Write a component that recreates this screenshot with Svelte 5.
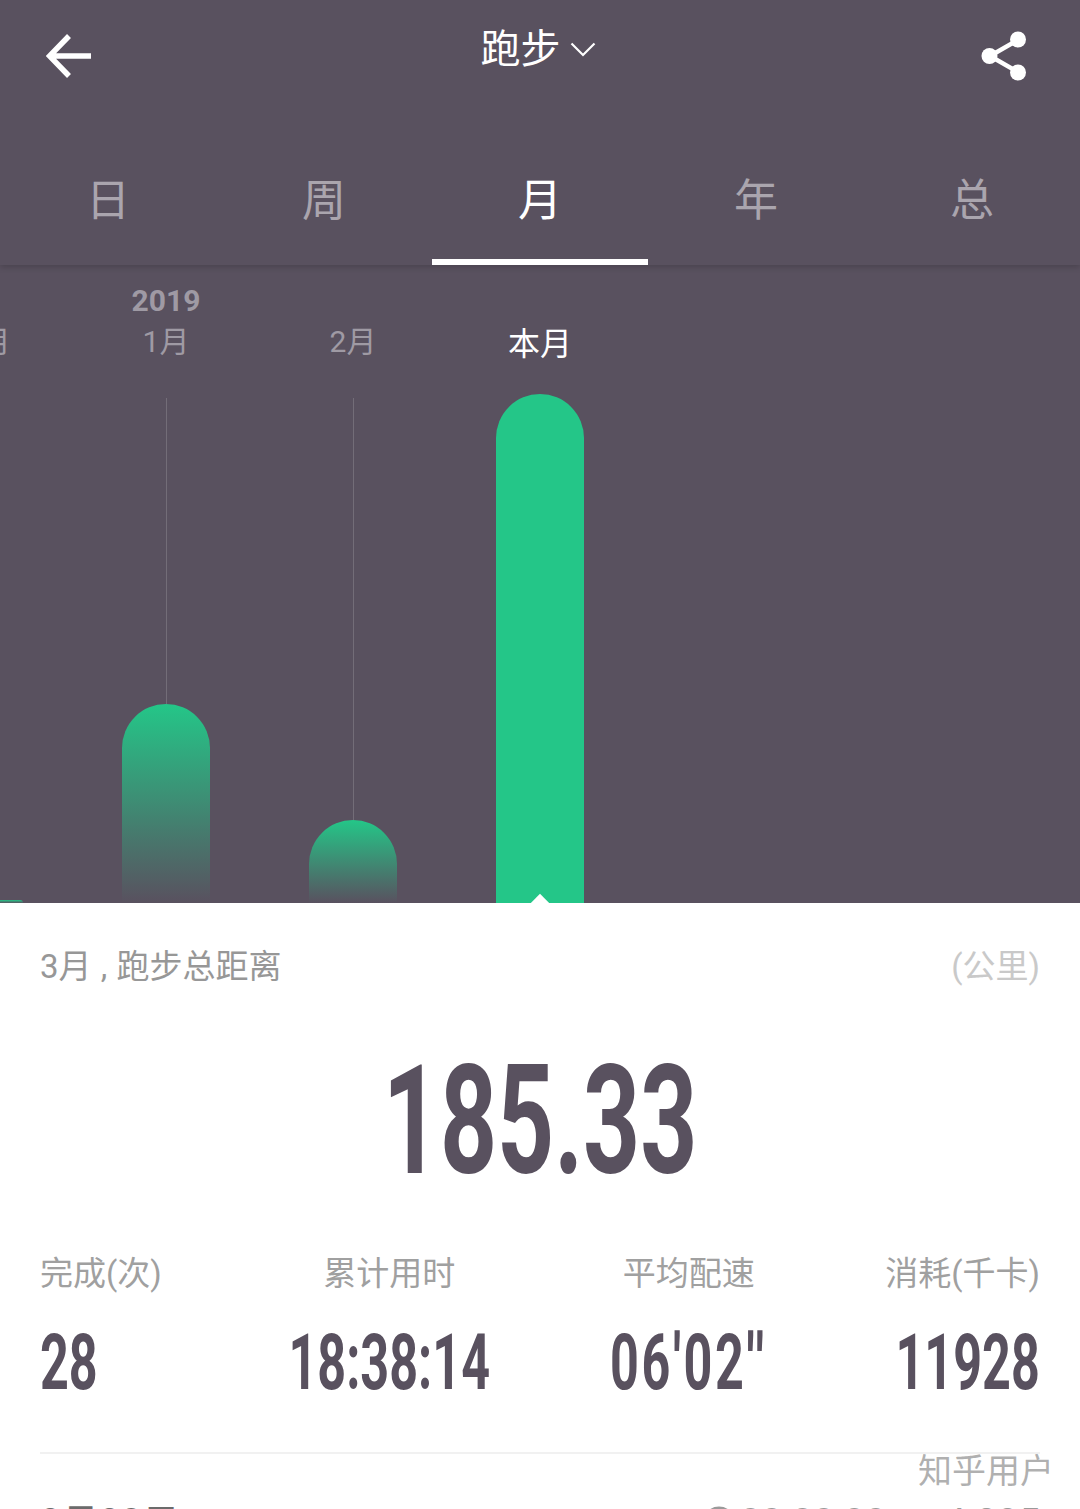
<script>
  const tabs = ['日', '周', '月', '年', '总'];
  const months = [
    { label: '12月', height: 3, kind: 'past' },
    { label: '1月', year: '2019', height: 199, kind: 'past' },
    { label: '2月', height: 83, kind: 'past' },
    { label: '本月', height: 509, kind: 'current' }
  ];
  const stats = [
    { label: '完成(次)', value: '28', align: 'start' },
    { label: '累计用时', value: '18:38:14', align: 'center' },
    { label: '平均配速', value: "06'02''", align: 'center' },
    { label: '消耗(千卡)', value: '11928', align: 'end' }
  ];
  const activeTab = 2;
</script>

<div class="page">
  <header class="header">
    <div class="topbar">
      <svg class="back" viewBox="0 0 46 44" width="46" height="44">
        <path d="M23 2 L3.500 22 L23 42 M4 22 H45" fill="none" stroke="#fff" stroke-width="5.500" />
      </svg>
      <div class="title">
        <span>跑步</span>
        <svg viewBox="0 0 26 15" width="26" height="15">
          <path d="M1.500 1.500 L13 13 L24.500 1.500" fill="none" stroke="#fff" stroke-width="2.200" />
        </svg>
      </div>
      <svg class="share" viewBox="0 0 46 50" width="46" height="50">
        <path d="M37 9 L9 25 L37 41" fill="none" stroke="#fff" stroke-width="4.500" />
        <circle cx="37" cy="8.500" r="8" fill="#fff" />
        <circle cx="8.500" cy="25" r="8" fill="#fff" />
        <circle cx="37" cy="41.500" r="8" fill="#fff" />
      </svg>
    </div>
    <nav class="tabs">
      {#each tabs as tab, i}
        <div class="tab" class:active={i === activeTab}>{tab}</div>
      {/each}
    </nav>
  </header>

  <section class="chart">
    {#each months as m}
      <div class="month">
        <div class="year">{m.year ?? ''}</div>
        <div class="month-label" class:current={m.kind === 'current'}>{m.label}</div>
        <div class="track">
          {#if m.kind !== 'current' && m.height > 10}
            <div class="line"></div>
          {/if}
          <div class="bar {m.kind}" style="height: {m.height}px;"></div>
          {#if m.kind === 'current'}
            <div class="pointer"></div>
          {/if}
        </div>
      </div>
    {/each}
  </section>

  <section class="panel">
    <div class="panel-head">
      <span>3月 <span class="comma">,</span> 跑步总距离</span>
      <span class="unit">(公里)</span>
    </div>
    <div class="total"><span>185.33</span></div>
    <div class="stats">
      {#each stats as s}
        <div class="stat {s.align}">
          <div class="stat-label">{s.label}</div>
          <div class="stat-value"><span class:pace={s.value.includes("'")}>{s.value}</span></div>
        </div>
      {/each}
    </div>
    <div class="record">
      <span class="record-date">3月30日</span>
      <span class="record-meta">
        <svg viewBox="0 0 30 30" width="34" height="34">
          <circle cx="15" cy="15" r="13" fill="none" stroke="#9a9a9a" stroke-width="3" />
        </svg>
        <span>00:00:00</span>
        <span class="record-dist">4.235</span>
      </span>
    </div>
  </section>

  <div class="watermark">知乎用户</div>
</div>

<style>
  :global(body) {
    margin: 0;
    background: #fff;
  }

  .page {
    position: relative;
    width: 1080px;
    height: 1509px;
    overflow: hidden;
    background: #59515f;
    font-family: Roboto, "Noto Sans CJK SC", sans-serif;
  }

  .header {
    position: relative;
    z-index: 1;
    height: 265px;
    background: #59515f;
    box-shadow: 0 2px 6px rgba(0, 0, 0, 0.18);
  }

  .topbar {
    display: flex;
    justify-content: space-between;
    align-items: flex-start;
    height: 135px;
    padding: 30px 53px 0 46px;
    box-sizing: border-box;
  }

  .back {
    margin-top: 4px;
  }

  .share {
    margin-top: 1px;
  }

  .title {
    display: flex;
    align-items: center;
    gap: 9px;
    margin: -2px 0 0 3px;
    color: #fff;
    font-size: 40px;
    line-height: 44px;
  }

  .title svg {
    margin-top: -2px;
  }

  .tabs {
    display: flex;
    height: 130px;
  }

  .tab {
    flex: 1;
    box-sizing: border-box;
    padding-top: 41px;
    text-align: center;
    font-size: 44px;
    line-height: 50px;
    color: #aaa5ae;
  }

  .tab.active {
    color: #fff;
    border-bottom: 6px solid #fff;
  }

  .chart {
    display: flex;
    height: 638px;
    margin-left: -114.5px;
    overflow: hidden;
  }

  .month {
    display: flex;
    flex-direction: column;
    align-items: center;
    width: 187px;
    flex-shrink: 0;
  }

  .year {
    height: 37px;
    margin-top: 18px;
    font-size: 30px;
    line-height: 36px;
    font-weight: 700;
    color: #9f9aa4;
  }

  .month-label {
    height: 78px;
    font-size: 30px;
    line-height: 44px;
    color: #9f9aa4;
  }

  .month-label.current {
    margin-top: 2px;
    height: 76px;
    font-size: 32px;
    line-height: 46px;
    color: #fff;
  }

  .track {
    position: relative;
    flex: 1;
    width: 88px;
    display: flex;
    flex-direction: column;
    align-items: center;
    justify-content: flex-end;
  }

  .line {
    flex: 1;
    width: 1px;
    background: rgba(255, 255, 255, 0.16);
  }

  .bar {
    width: 88px;
    flex-shrink: 0;
    border-radius: 44px 44px 0 0;
  }

  .bar.past {
    background: linear-gradient(180deg, #24c688 0%, rgba(36, 198, 136, 0) 100%);
  }

  .bar.current {
    background: #24c688;
  }

  .pointer {
    position: absolute;
    left: 35px;
    bottom: -9px;
    width: 18px;
    height: 18px;
    background: #fff;
    transform: rotate(45deg) scale(0.72);
  }

  .panel {
    height: 606px;
    padding: 0 40px;
    background: #fff;
    position: relative;
  }

  .panel-head {
    display: flex;
    justify-content: space-between;
    padding-top: 44px;
    font-size: 33px;
    line-height: 40px;
    color: #979797;
  }

  .comma {
    margin: 0 1px;
  }

  .unit {
    color: #c9c9c9;
  }

  .total {
    display: flex;
    justify-content: center;
    height: 175px;
    margin-top: 47px;
    font-size: 152px;
    line-height: 175px;
    font-weight: 700;
    color: #59515f;
  }

  .total span {
    flex-shrink: 0;
    transform: scaleX(0.655);
    white-space: nowrap;
  }

  .stats {
    display: flex;
    justify-content: space-between;
    margin-top: 45px;
    padding-bottom: 47px;
    border-bottom: 2px solid #f1f1f1;
  }

  .stat {
    display: flex;
    flex-direction: column;
  }

  .stat.start {
    width: 127px;
    align-items: flex-start;
  }

  .stat.center {
    align-items: center;
  }

  .stat.center:nth-child(2) {
    width: 200px;
  }

  .stat.center:nth-child(3) {
    width: 154px;
  }

  .stat.end {
    width: 152px;
    align-items: flex-end;
  }

  .stat-label {
    font-size: 33px;
    line-height: 40px;
    color: #a0a0a0;
    white-space: nowrap;
  }

  .stat-value {
    display: flex;
    justify-content: center;
    margin-top: 27px;
    font-size: 78px;
    line-height: 84px;
    font-weight: 700;
    color: #59515f;
  }

  .stat-value span {
    display: block;
    flex-shrink: 0;
    white-space: nowrap;
    transform: scaleX(0.645);
  }

  .stat-value span.pace {
    letter-spacing: 4px;
  }

  .stat.start .stat-value span {
    transform-origin: left;
  }

  .stat.end .stat-value span {
    transform-origin: right;
  }

  .record {
    display: flex;
    justify-content: space-between;
    align-items: flex-start;
    padding-top: 47px;
    font-size: 38px;
    line-height: 44px;
    color: #6b6b6b;
  }

  .record-meta {
    display: flex;
    align-items: flex-start;
    gap: 4px;
    color: #9a9a9a;
  }

  .record-meta svg {
    margin-top: 5px;
  }

  .record-dist {
    margin-left: 54px;
  }

  .watermark {
    position: absolute;
    right: 26px;
    top: 1451px;
    font-size: 34px;
    line-height: 40px;
    color: rgba(150, 150, 150, 0.75);
    text-shadow: 1px 1px 0 rgba(255, 255, 255, 0.6);
  }
</style>
